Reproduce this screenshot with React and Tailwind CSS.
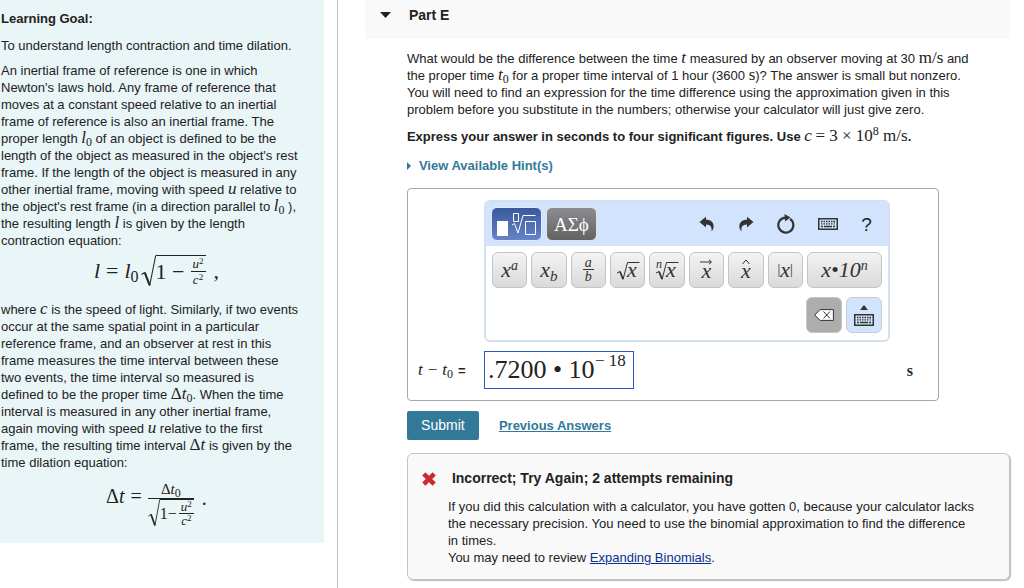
import { useState } from "react";

const MATH = "font-['Liberation_Serif',serif] font-normal text-[#222]";
const KEY =
    "h-9 flex flex-1 items-center justify-center rounded-md border border-[#c4c4c4] bg-linear-to-b from-[#f3f3f3] to-[#dadada] text-[#333]";

function Var({ children, sub, upright }) {
    return (
        <span className={`${MATH} text-[17px] leading-3 ${upright ? "" : "italic"}`}>
            {children}
            {sub && <sub className="text-[12px] not-italic">{sub}</sub>}
        </span>
    );
}

function Radical({ children, small }) {
    return (
        <span className="inline-flex items-stretch">
            <svg
                viewBox="0 0 14 32"
                preserveAspectRatio="none"
                className={small ? "w-[12px] h-[28px]" : "w-[15px] h-[32px]"}
                fill="none"
                stroke="#222"
            >
                <path d="M0.5 19.5L3.5 17.5" strokeWidth="1" />
                <path d="M3.5 17.5L8 30" strokeWidth="2" />
                <path d="M8 31L13.7 0.5" strokeWidth="1" />
            </svg>
            <span className="inline-flex items-center border-t border-[#222]">{children}</span>
        </span>
    );
}

function Fraction({ top, bottom, small }) {
    return (
        <span className={`inline-flex flex-col items-center text-[13px] ${small ? "leading-[13px]" : "leading-[15px]"}`}>
            <span className="border-b border-[#222] px-[2px]">{top}</span>
            <span>{bottom}</span>
        </span>
    );
}

function Squared({ children }) {
    return (
        <span className="italic">
            {children}
            <sup className="-top-1 text-[9px] not-italic">2</sup>
        </span>
    );
}

function KeyboardIcon() {
    return (
        <svg width="20" height="12" viewBox="0 0 20 12" fill="none" stroke="#333">
            <rect x="0.75" y="0.75" width="18.5" height="10.5" strokeWidth="1.5" />
            <path d="M3 3.5H17" strokeWidth="1.4" strokeDasharray="1.5 1" />
            <path d="M3 5.8H15M16.3 3V6.4" strokeWidth="1.3" strokeDasharray="1.5 1" />
            <path d="M3 8.5H5M6 8.5H14M15 8.5H17" strokeWidth="1.4" />
        </svg>
    );
}

function UndoIcon({ flip }) {
    return (
        <svg width="16" height="16" viewBox="0 0 16 16" fill="#333" className={flip ? "-scale-x-100" : ""}>
            <path d="M0.5 6L7 0.8V3.8C12 3.8 15 6.5 14.6 11C14.4 13 13.6 14.4 12.6 15.4C13 11 11.5 8.6 7 8.5V11.4Z" />
        </svg>
    );
}

function RootKey({ index }) {
    return (
        <svg width="28" height="32" viewBox="0 -5 28 32" fill="none" stroke="#333" className="overflow-visible">
            <path d="M3 14L6 12.5" />
            <path d="M6 12.5L9 20" strokeWidth="1.8" />
            <path d="M9 20.5L13.5 3.5H25.5" />
            <text x="13" y="18" fontSize="22" fontStyle="italic" fontFamily="Liberation Serif, serif" fill="#333" stroke="none">x</text>
            {index && (
                <text x="3" y="9" fontSize="12" fontStyle="italic" fontFamily="Liberation Serif, serif" fill="#333" stroke="none">n</text>
            )}
        </svg>
    );
}

function Accented({ path }) {
    return (
        <span className="flex flex-col items-center">
            <svg width="12" height="6" viewBox="0 0 12 6" fill="none" stroke="#333">
                <path d={path} />
            </svg>
            <span className="pb-1 leading-3">x</span>
        </span>
    );
}

function Sidebar() {
    return (
        <aside className="w-[33%] shrink-0 border-r border-[#b9c3cf] pr-[13px]">
            <div className="bg-[#e9f5f7] pt-[10px] pb-[15px] pl-px">
                <h2 className="font-bold">Learning Goal:</h2>
                <p className="mt-[10px]">To understand length contraction and time dilation.</p>
                <p className="mt-2 pr-6">
                    An inertial frame of reference is one in which Newton's laws hold. Any frame of
                    reference that moves at a constant speed relative to an inertial frame of
                    reference is also an inertial frame. The proper length <Var sub="0">l</Var>{" "}
                    of an object is defined to be the length of the object as measured in the
                    object's rest frame. If the length of the object is measured in any other
                    inertial frame, moving with speed <Var>u</Var> relative to the object's rest
                    frame (in a direction parallel to <Var sub="0">l</Var> ), the resulting length{" "}
                    <Var>l</Var> is given by the length contraction equation:
                </p>
                <div className={`${MATH} mt-[6px] flex h-[32px] items-center justify-center pr-3 text-[22px] leading-none`}>
                    <span className="italic">l</span>
                    <span className="mx-[6px]">=</span>
                    <span className="mr-[2px] italic">
                        l<sub className="text-[16px] not-italic">0</sub>
                    </span>
                    <Radical>
                        <span className="mr-[6px]">1 −</span>
                        <Fraction top={<Squared>u</Squared>} bottom={<Squared>c</Squared>} />
                    </Radical>
                    <span className="ml-2">,</span>
                </div>
                <p className="mt-[14px] pr-6">
                    where <Var>c</Var> is the speed of light. Similarly, if two events occur at the
                    same spatial point in a particular reference frame, and an observer at rest in
                    this frame measures the time interval between these two events, the time
                    interval so measured is defined to be the proper time{" "}
                    <Var upright>Δ<i>t</i><sub className="text-[12px]">0</sub></Var>. When the time
                    interval is measured in any other inertial frame, again moving with speed{" "}
                    <Var>u</Var> relative to the first frame, the resulting time interval{" "}
                    <Var upright>Δ<i>t</i></Var> is given by the time dilation equation:
                </p>
                <div className={`${MATH} mt-[9px] flex h-[48px] items-center justify-center pr-3 text-[20px] leading-none`}>
                    <span className="pb-4">Δ<i>t</i></span>
                    <span className="mx-[6px] pb-4">=</span>
                    <span className="flex flex-col items-center">
                        <span className="w-full border-b border-[#222] text-center text-[15px] leading-[17px]">
                            Δ<i>t</i>
                            <sub className="text-[12px]">0</sub>
                        </span>
                        <Radical small>
                            <span className="mr-[2px] text-[16px]">1−</span>
                            <Fraction small top={<Squared>u</Squared>} bottom={<Squared>c</Squared>} />
                        </Radical>
                    </span>
                    <span className="ml-2 pb-3">.</span>
                </div>
            </div>
        </aside>
    );
}

function MathPalette() {
    return (
        <div className="flex-1 overflow-hidden rounded-md border-2 border-[#d3e0f0] bg-white">
            <div className="flex h-[44px] items-center bg-[#d2e4fd] pr-4 pl-[5px]">
                <button aria-label="Templates" className="flex h-[34px] w-[51px] items-center justify-center rounded-md border border-[#e3ebf7] bg-linear-to-b from-[#3b589c] to-[#6585c8]">
                    <svg width="40" height="26" viewBox="0 0 40 26" fill="none" stroke="#fff">
                        <path d="M1 10H12V25H1Z" fill="#fff" stroke="none" />
                        <path d="M17.5 2.5H22.5V10.5H17.5ZM29.5 10.5H39.5V23.5H29.5Z" />
                        <path d="M16 14L18.5 12.5L22 22L27 4.5H39.5" />
                    </svg>
                </button>
                <button className="ml-1 h-[34px] w-[51px] rounded-md border border-[#e3e3e3] bg-linear-to-b from-[#8d8c91] to-[#636363] font-['Liberation_Serif',serif] text-[19px] leading-none text-white">
                    ΑΣϕ
                </button>
                <div className="ml-auto flex items-center gap-[23px]">
                    <button aria-label="Undo"><UndoIcon /></button>
                    <button aria-label="Redo"><UndoIcon flip /></button>
                    <button aria-label="Reset">
                        <svg width="18" height="20" viewBox="0 0 18 20" fill="none" stroke="#333">
                            <path d="M13 4.8A7.5 7.5 0 1 1 8 3.6" strokeWidth="2.2" />
                            <path d="M7.5 0L13.5 3.5L8 7.5Z" fill="#333" stroke="none" />
                        </svg>
                    </button>
                    <button aria-label="Keyboard shortcuts"><KeyboardIcon /></button>
                    <button aria-label="Help" className="text-[19px]">?</button>
                </div>
            </div>
            <div className="px-[6px] pt-[6px] pb-[7px] font-['Liberation_Serif',serif] text-[22px] leading-none italic">
                <div className="flex gap-1">
                    <button className={KEY}><span>x<sup className="text-[14px]">a</sup></span></button>
                    <button className={KEY}><span>x<sub className="text-[15px]">b</sub></span></button>
                    <button className={KEY}>
                        <span className="flex flex-col text-[14px] leading-3">
                            <span className="border-b border-[#333] px-[2px]">a</span>
                            <span className="pt-px">b</span>
                        </span>
                    </button>
                    <button className={KEY} aria-label="Square root"><RootKey /></button>
                    <button className={KEY} aria-label="Nth root"><RootKey index /></button>
                    <button className={KEY} aria-label="Vector"><Accented path="M0 3H11M9 0.8L11.5 3L9 5.2" /></button>
                    <button className={KEY} aria-label="Unit vector"><Accented path="M2.5 5L6 1L9.5 5" /></button>
                    <button className={KEY}>
                        <span className="text-[14px] not-italic">|</span>x<span className="text-[14px] not-italic">|</span>
                    </button>
                    <button className={`${KEY} max-w-[75px] min-w-[75px]`}>
                        <span>x•10<sup className="text-[14px]">n</sup></span>
                    </button>
                </div>
                <div className="mt-[9px] flex justify-end gap-1">
                    <button aria-label="Backspace" className="flex h-9 w-9 items-center justify-center rounded-md border border-[#c6c6c6] bg-[#adadad]">
                        <svg width="20" height="12" viewBox="0 0 20 12" fill="#fff" stroke="#333">
                            <path d="M0.8 6L6 0.6H19.4V11.4H6Z" />
                            <path d="M9.5 2.5L16 9.5M16 2.5L9.5 9.5" />
                        </svg>
                    </button>
                    <button aria-label="Hide keyboard" className="flex h-9 w-9 flex-col items-center justify-center gap-1 rounded-md border border-[#c4ccd8] bg-[#d2e4fd]">
                        <svg width="8" height="5" viewBox="0 0 8 5" fill="#333">
                            <path d="M0 5L4 0L8 5Z" />
                        </svg>
                        <KeyboardIcon />
                    </button>
                </div>
            </div>
        </div>
    );
}

function AnswerForm() {
    const [mantissa, setMantissa] = useState(".7200 • 10");
    const [exponent, setExponent] = useState("− 18");

    return (
        <form onSubmit={(e) => e.preventDefault()}>
            <div className="max-w-[532px] rounded border border-[#a8a8a8] pt-[11px] pb-[11px]">
                <div className="flex pr-12 pl-[76px]">
                    <MathPalette />
                </div>
                <div className="mt-[9px] flex items-center pr-[25px] pl-[10px]">
                    <label htmlFor="answer" className="flex w-[66px] shrink-0 items-center gap-[5px]">
                        <Var>t</Var>
                        <Var upright>−</Var>
                        <Var sub="0">t</Var>
                        <b>=</b>
                    </label>
                    <div className="flex h-[38px] w-[150px] items-center border border-[#2d55c3] pl-[3px] font-['Liberation_Serif',serif] text-[#222]">
                        <input
                            id="answer"
                            value={mantissa}
                            onChange={(e) => setMantissa(e.target.value)}
                            className="w-[107px] text-[26px] leading-none outline-none"
                        />
                        <input
                            aria-label="Exponent"
                            value={exponent}
                            onChange={(e) => setExponent(e.target.value)}
                            className="w-9 self-start text-[17px] leading-[18px] outline-none"
                        />
                    </div>
                    <span className="ml-auto font-['Liberation_Serif',serif] text-[16px] font-bold">s</span>
                </div>
            </div>
            <div className="mt-[10px] flex items-center gap-5">
                <button type="submit" className="h-[29px] w-[72px] rounded-xs bg-[#33799a] text-[14px] text-white">
                    Submit
                </button>
                <a href="#previous" className="text-[13px] font-bold text-[#33799a] underline">
                    Previous Answers
                </a>
            </div>
        </form>
    );
}

function App() {
    return (
        <div className="flex min-h-screen bg-white font-['Liberation_Sans',Arial,sans-serif] text-[13px] leading-[17px] text-[#222]">
            <Sidebar />
            <main className="min-w-0 flex-1 pr-[14px] pl-[27px]">
                <button className="flex h-[39px] w-full items-start bg-[#f9f9f9] pt-[7px] pl-[15px] text-[14px] font-bold">
                    <svg width="11" height="6" viewBox="0 0 11 6" className="mt-[5px] mr-[18px]" fill="#222">
                        <path d="M0 0H11L5.5 6Z" />
                    </svg>
                    Part E
                </button>
                <div className="pl-[42px]">
                    <p className="mt-[11px] pr-9">
                        What would be the difference between the time <Var>t</Var> measured by an
                        observer moving at 30 <Var upright>m/s</Var> and the proper time{" "}
                        <Var sub="0">t</Var> for a proper time interval of 1 hour (3600{" "}
                        <Var upright>s</Var>)? The answer is small but nonzero. You will need to
                        find an expression for the time difference using the approximation given in
                        this problem before you substitute in the numbers; otherwise your calculator
                        will just give zero.
                    </p>
                    <p className="mt-[10px] font-bold">
                        Express your answer in seconds to four significant figures. Use{" "}
                        <Var>c</Var> <Var upright>= 3 × 10<sup className="text-[12px]">8</sup> m/s</Var>.
                    </p>
                    <button className="mt-3 mb-[14px] flex items-center gap-2 font-bold text-[#33799a]">
                        <svg width="4" height="8" viewBox="0 0 4 8" fill="#33799a">
                            <path d="M0 0L4 4L0 8Z" />
                        </svg>
                        View Available Hint(s)
                    </button>
                    <AnswerForm />
                    <section className="mt-[13px] rounded-md border border-[#c4c4c4] bg-[#f9f9f9] px-[14px] pt-4 pb-[13px] shadow-[1px_1px_1px_#bbb]">
                        <h3 className="flex items-center gap-4 text-[14px] font-bold">
                            <svg width="14" height="14" viewBox="0 0 14 14" stroke="#cb2a30" strokeWidth="4.5">
                                <path d="M1.8 1.8L12.2 12.2M12.2 1.8L1.8 12.2" />
                            </svg>
                            Incorrect; Try Again; 2 attempts remaining
                        </h3>
                        <p className="mt-[11px] pr-5 pl-[26px]">
                            If you did this calculation with a calculator, you have gotten 0,
                            because your calculator lacks the necessary precision. You need to use
                            the binomial approximation to find the difference in times.
                            <br />
                            You may need to review{" "}
                            <a href="#binomials" className="text-[#0b2f91] underline">Expanding Binomials</a>.
                        </p>
                    </section>
                </div>
            </main>
        </div>
    );
}

export default App;
